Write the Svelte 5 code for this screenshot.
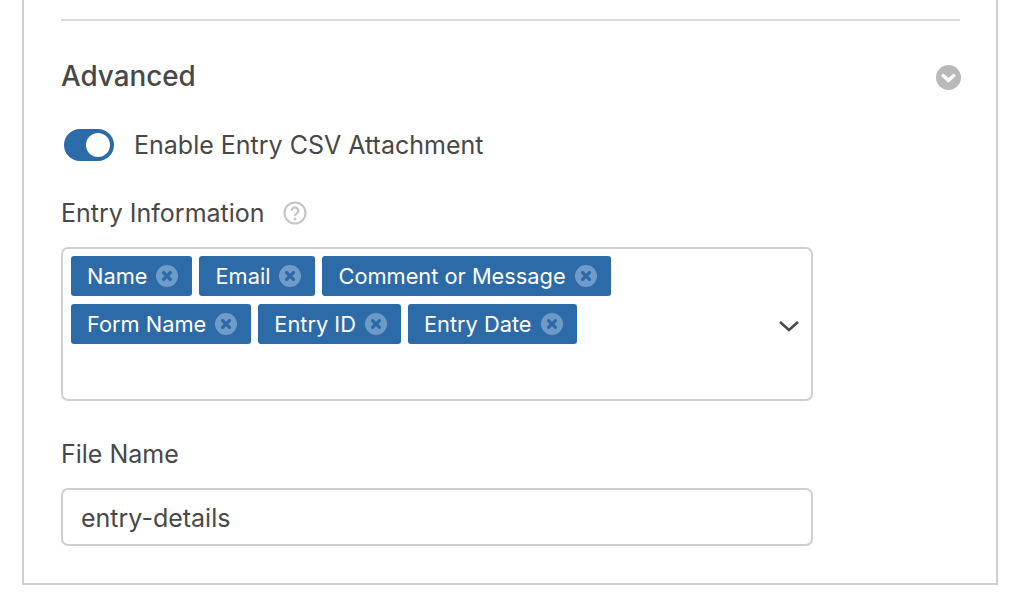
<script>
  // Advanced settings panel with the entry CSV attachment options
  const rows = [
    ["Name", "Email", "Comment or Message"],
    ["Form Name", "Entry ID", "Entry Date"],
  ];
</script>

<div class="panel">
  <div class="divider"></div>

  <div class="head">
    <h2>Advanced</h2>
    <svg class="collapse" viewBox="0 0 26 26" width="25" height="25" aria-hidden="true">
      <circle cx="13" cy="13" r="13" fill="#b9b9b9" />
      <path d="M7.5 11 13 16.2 18.5 11" fill="none" stroke="#fff" stroke-width="3.6" stroke-linecap="round" stroke-linejoin="round" />
    </svg>
  </div>

  <div class="toggle-row">
    <span class="toggle"><span class="knob"></span></span>
    <span class="text">Enable Entry CSV Attachment</span>
  </div>

  <div class="label info">
    <span class="text">Entry Information</span>
    <svg viewBox="0 0 24 24" width="24" height="24" aria-hidden="true">
      <circle cx="12" cy="12" r="10.5" fill="none" stroke="#c4c4c4" stroke-width="2" />
      <path d="M8.6 9.6a3.4 3.2 0 1 1 5.2 2.8c-1.2.8-1.8 1.3-1.8 2.6" fill="none" stroke="#c4c4c4" stroke-width="2.2" />
      <circle cx="12" cy="18" r="1.4" fill="#c4c4c4" />
    </svg>
  </div>

  <div class="select">
    <div class="tags">
      {#each rows as row}
        <div class="tag-row">
          {#each row as tag}
            <span class="tag">
              {tag}
              <svg viewBox="0 0 22 22" width="22" height="22" aria-hidden="true">
                <circle cx="11" cy="11" r="11" fill="#6f9bc9" />
                <path d="M7.6 7.6 14.4 14.4M14.4 7.6 7.6 14.4" stroke="#2d6aa8" stroke-width="3.4" stroke-linecap="round" />
              </svg>
            </span>
          {/each}
        </div>
      {/each}
    </div>
    <svg class="chevron" viewBox="0 0 22 12" width="22" height="12" aria-hidden="true">
      <path d="M2 2 11 10 20 2" fill="none" stroke="#4a4a4a" stroke-width="2.6" />
    </svg>
  </div>

  <div class="label file">File Name</div>
  <div class="input">entry-details</div>
</div>

<style>
  :global(body) {
    background: #fff;
    font-family: Inter, "Liberation Sans", sans-serif;
    color: #484848;
  }
  .panel {
    box-sizing: border-box;
    width: 976px;
    height: 585px;
    margin-left: 22px;
    padding: 19px 36px 0 37px;
    border: 2px solid #d0d0d0;
    border-top: 0;
    overflow: hidden;
  }
  .divider {
    height: 2px;
    background: #dcdcdc;
  }
  .head {
    display: flex;
    align-items: center;
    justify-content: space-between;
    margin-top: 38px;
    height: 34px;
  }
  h2 {
    margin: 0;
    font-size: 27.8px;
    font-weight: 550;
    line-height: 34px;
  }
  .collapse {
    margin-top: 2px;
    margin-right: -1px;
  }
  .toggle-row {
    display: flex;
    align-items: center;
    gap: 20px;
    margin-top: 36px;
    padding-left: 3px;
    height: 32px;
  }
  .toggle {
    display: flex;
    align-items: center;
    justify-content: flex-end;
    box-sizing: border-box;
    width: 50px;
    height: 32px;
    padding-right: 4px;
    border-radius: 16px;
    background: #2d6aa8;
  }
  .knob {
    width: 24px;
    height: 24px;
    border-radius: 50%;
    background: #fff;
  }
  .text,
  .label {
    font-size: 25px;
    line-height: 32px;
  }
  .label.info {
    display: flex;
    align-items: center;
    gap: 18px;
    margin-top: 36px;
  }
  .select {
    display: flex;
    align-items: center;
    justify-content: space-between;
    box-sizing: border-box;
    width: 752px;
    height: 154px;
    margin-top: 18px;
    padding: 7px 11px 0 8px;
    border: 2px solid #cfcfcf;
    border-radius: 7px;
  }
  .tags {
    align-self: flex-start;
    display: flex;
    flex-direction: column;
    gap: 8px;
  }
  .tag-row {
    display: flex;
    gap: 7px;
  }
  .tag {
    display: flex;
    align-items: center;
    gap: 9px;
    height: 40px;
    padding: 0 14px 0 16px;
    border-radius: 3px;
    background: #2d6aa8;
    color: #fff;
    font-size: 21.8px;
  }
  .chevron {
    margin-top: -3px;
  }
  .label.file {
    margin-top: 37px;
  }
  .input {
    box-sizing: border-box;
    width: 752px;
    height: 58px;
    margin-top: 18px;
    padding-left: 18px;
    border: 2px solid #cfcfcf;
    border-radius: 7px;
    font-size: 25px;
    line-height: 56px;
  }
</style>
